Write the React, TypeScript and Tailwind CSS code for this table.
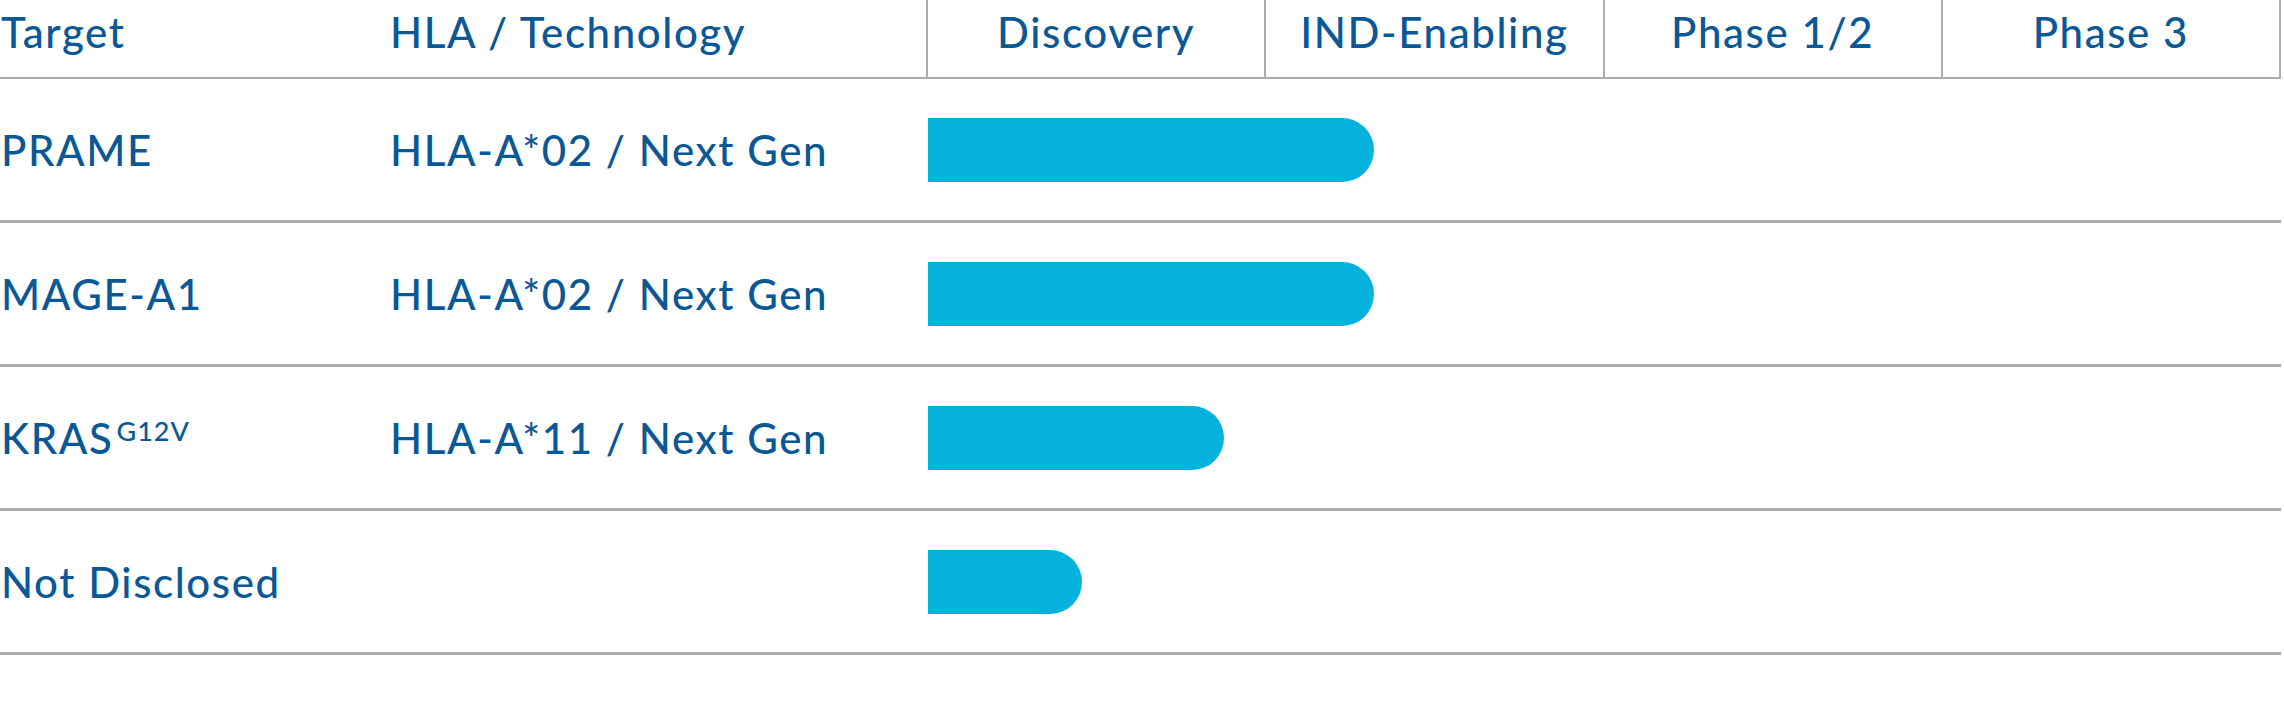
import React from "react";

const rows = [
  { target: "PRAME", sup: "", hla: "HLA-A*02 / Next Gen", bar: 446 },
  { target: "MAGE-A1", sup: "", hla: "HLA-A*02 / Next Gen", bar: 446 },
  { target: "KRAS", sup: "G12V", hla: "HLA-A*11 / Next Gen", bar: 296 },
  { target: "Not Disclosed", sup: "", hla: "", bar: 154 },
];

const phases = ["Discovery", "IND-Enabling", "Phase 1/2", "Phase 3"];

export default function App() {
  return (
    <div
      className="w-[2284px] h-[710px] bg-white text-[#0b5896] overflow-hidden"
      style={{ fontFamily: "Lato, 'Open Sans', sans-serif" }}
    >
      <div className="w-[2281px]">
        {/* header */}
        <div className="flex h-[79px] border-b-2 border-[#acacac] text-[42px] leading-none font-medium tracking-[1.6px]">
          <div className="w-[390px] pl-[1px] pt-[11px]">Target</div>
          <div className="w-[536px] pt-[11px]">HLA / Technology</div>
          <div className="flex flex-1 border-r-2 border-[#acacac]">
            {phases.map((p) => (
              <div
                key={p}
                className="flex-1 border-l-2 border-[#acacac] text-center pt-[11px]"
              >
                {p}
              </div>
            ))}
          </div>
        </div>
        {/* rows */}
        {rows.map((r) => (
          <div
            key={r.target}
            className="flex items-center h-[144px] border-b-[3px] border-[#acacac] text-[42px] leading-none font-medium tracking-[1.6px]"
          >
            <div className="w-[390px] pl-[1px]">
              {r.target}
              {r.sup && (
                <sup className="text-[27px] relative top-[0px] align-top leading-none ml-[3px] tracking-[1px]">
                  {r.sup}
                </sup>
              )}
            </div>
            <div className="w-[536px]">{r.hla}</div>
            <div className="flex-1 pl-[2px]">
              <div
                className="h-[64px] bg-[#05b2dc] rounded-r-full"
                style={{ width: r.bar }}
              />
            </div>
          </div>
        ))}
      </div>
    </div>
  );
}
